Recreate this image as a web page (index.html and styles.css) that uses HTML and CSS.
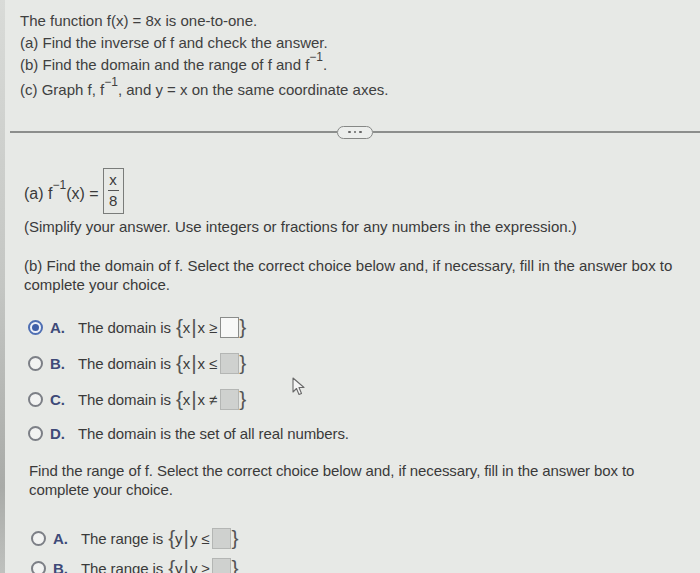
FILE: index.html
```html
<!DOCTYPE html>
<html>
<head>
<meta charset="utf-8">
<link rel="stylesheet" href="styles.css">
</head>
<body>
<div class="edge"></div>
<div class="page">
  <div class="problem">
    <div class="pline">The function f(x) = 8x is one-to-one.</div>
    <div class="pline">(a) Find the inverse of f and check the answer.</div>
    <div class="pline">(b) Find the domain and the range of f and f<sup>−1</sup>.</div>
    <div class="pline">(c) Graph f, f<sup>−1</sup>, and y = x on the same coordinate axes.</div>
  </div>

  <div class="divider">
    <div class="rule"></div>
    <div class="pill"><span></span><span></span><span></span></div>
    <div class="rule"></div>
  </div>

  <div class="parta">
    <span class="lbl">(a) f<sup>−1</sup>(x) =</span>
    <span class="fracbox"><span class="num">x</span><span class="bar"></span><span class="den">8</span></span>
  </div>
  <div class="note">(Simplify your answer. Use integers or fractions for any numbers in the expression.)</div>

  <div class="partb">(b) Find the domain of f. Select the correct choice below and, if necessary, fill in the answer box to complete your choice.</div>

  <div class="choices">
    <div class="choice">
      <span class="radio on"></span><span class="letter">A.</span>
      <span class="ctext">The domain is <span class="set"><span class="br">{</span>x<span class="vb">|</span>x ≥ <span class="ibox"></span><span class="br">}</span></span></span>
    </div>
    <div class="choice">
      <span class="radio"></span><span class="letter">B.</span>
      <span class="ctext">The domain is <span class="set"><span class="br">{</span>x<span class="vb">|</span>x ≤ <span class="ibox gray"></span><span class="br">}</span></span></span>
    </div>
    <div class="choice">
      <span class="radio"></span><span class="letter">C.</span>
      <span class="ctext">The domain is <span class="set"><span class="br">{</span>x<span class="vb">|</span>x ≠ <span class="ibox gray"></span><span class="br">}</span></span></span>
    </div>
    <div class="choice">
      <span class="radio"></span><span class="letter">D.</span>
      <span class="ctext">The domain is the set of all real numbers.</span>
    </div>
  </div>

  <div class="range">Find the range of f. Select the correct choice below and, if necessary, fill in the answer box to complete your choice.</div>

  <div class="choices rchoices">
    <div class="choice">
      <span class="radio"></span><span class="letter">A.</span>
      <span class="ctext">The range is <span class="set"><span class="br">{</span>y<span class="vb">|</span>y ≤ <span class="ibox gray"></span><span class="br">}</span></span></span>
    </div>
    <div class="choice">
      <span class="radio"></span><span class="letter">B.</span>
      <span class="ctext">The range is <span class="set"><span class="br">{</span>y<span class="vb">|</span>y ≥ <span class="ibox gray"></span><span class="br">}</span></span></span>
    </div>
  </div>
</div>
<svg class="cursor" width="14" height="20" viewBox="0 0 14 20"><path d="M1 1 L1 15 L4.5 11.5 L7 17.5 L9.5 16.5 L7 10.5 L12 10.5 Z" fill="#f4f4f4" stroke="#6a6a6a" stroke-width="1.1" stroke-linejoin="round"/></svg>
</body>
</html>
```
FILE: styles.css
```css
html, body {
  margin: 0;
  padding: 0;
}
body {
  width: 700px;
  height: 573px;
  overflow: hidden;
  background: #e7e9e6;
  font-family: "Liberation Sans", Arial, sans-serif;
  color: #3a3a3a;
  position: relative;
}
.edge {
  position: absolute;
  left: 0;
  top: 0;
  width: 5px;
  height: 573px;
  background: linear-gradient(#d9dbd8, #c4c6c3 50%, #a9aba8 85%, #bfc1be);
}
.page {
  padding: 10px 0 0 0;
}
.problem {
  padding-left: 20px;
  font-size: 15px;
  color: #404040;
}
.pline {
  line-height: 22px;
  height: 22px;
}
.pline:nth-child(4) {
  margin-top: 3px;
}
sup {
  font-size: 12px;
  line-height: 0;
  position: relative;
  top: -3px;
}
.divider {
  display: flex;
  align-items: center;
  margin: 24px 0 0 10px;
  height: 14px;
}
.rule {
  flex: 1;
  height: 1.5px;
  background: #8c8e8c;
}
.pill {
  width: 34px;
  height: 11px;
  border: 1.5px solid #868886;
  border-radius: 7px;
  display: flex;
  align-items: center;
  justify-content: center;
  gap: 3px;
  background: #eceeec;
}
.pill span {
  width: 2.5px;
  height: 2.5px;
  border-radius: 50%;
  background: #666;
}
.parta {
  display: flex;
  align-items: center;
  margin: 28px 0 0 24px;
  font-size: 16px;
  height: 47px;
}
.parta .lbl {
  margin-right: 4px;
  position: relative;
  top: 3px;
}
.fracbox {
  display: inline-flex;
  flex-direction: column;
  align-items: center;
  width: 19px;
  height: 44px;
  border: 1.2px solid #7a7c7a;
  justify-content: center;
  font-size: 15px;
}
.fracbox .num, .fracbox .den {
  line-height: 18px;
}
.fracbox .bar {
  width: 11px;
  height: 1px;
  background: #555;
  margin: 1px 0;
}
.note {
  margin: 3px 0 0 24px;
  font-size: 15px;
  line-height: 19px;
}
.partb {
  margin: 20px 0 0 24px;
  font-size: 15px;
  line-height: 19px;
  width: 670px;
}
.choices {
  margin: 15px 0 0 28px;
}
.choice {
  display: flex;
  align-items: center;
  height: 36px;
  font-size: 15px;
}
.choice:nth-child(4) {
  height: 32px;
}
.radio {
  width: 11px;
  height: 11px;
  border: 2px solid #7c7f86;
  border-radius: 50%;
  background: #f2f3f2;
  margin-right: 7px;
  position: relative;
  box-sizing: content-box;
}
.radio.on {
  border-color: #4f6fb3;
  background: #eef1f8;
}
.radio.on::after {
  content: "";
  position: absolute;
  left: 2px;
  top: 2px;
  width: 7px;
  height: 7px;
  border-radius: 50%;
  background: #3f5fa8;
}
.letter {
  font-weight: bold;
  color: #3e4a78;
  width: 28px;
}
.ctext {
  display: inline-flex;
  align-items: center;
  letter-spacing: -0.1px;
}
.set {
  display: inline-flex;
  align-items: center;
  margin-left: 5px;
}
.br {
  font-size: 21px;
  color: #555;
}
.vb {
  font-size: 21px;
  margin: 0 1px;
  color: #555;
}
.ibox {
  display: inline-block;
  width: 17px;
  height: 19px;
  border: 1px solid #8a8c8a;
  background: #f7f8f7;
  margin-left: 3px;
}
.ibox.gray {
  background: #cfd1cf;
  border-color: #b4b6b4;
}
.range {
  margin: 12px 0 0 29px;
  font-size: 15px;
  line-height: 19px;
  width: 650px;
  letter-spacing: -0.1px;
}
.rchoices {
  margin: 24px 0 0 31px;
}
.rchoices .choice {
  height: 30px;
}
.cursor {
  position: absolute;
  left: 292px;
  top: 377px;
}
```
